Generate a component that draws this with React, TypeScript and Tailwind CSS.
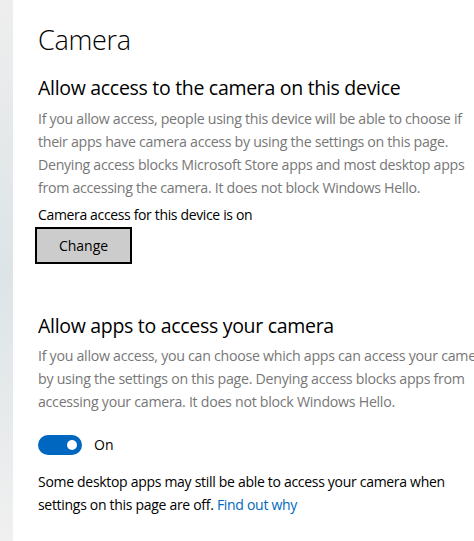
export default function App() {
  return (
    <div
      className="flex h-[541px] w-[474px] overflow-hidden bg-white text-black"
      style={{ fontFamily: '"Open Sans", "Noto Sans", sans-serif' }}
    >
      {/* left nav edge */}
      <div className="w-[13px] shrink-0 bg-gradient-to-b from-[#eeeeee] via-[#dde4e7] to-[#f0f0f0]" />

      <div className="min-w-0 flex-1 overflow-hidden pl-[25px] pt-[22px]">
        <h1 className="text-[27px] leading-[36px] font-light tracking-[-0.3px]">Camera</h1>

        <h2 className="mt-[16px] text-[19.5px] leading-[28px] tracking-[-0.3px]">Allow access to the camera on this device</h2>
        <p className="mt-[5px] w-[436px] text-[14.2px] leading-[23px] text-[#777777] tracking-[-0.3px]">
          If you allow access, people using this device will be able to choose if their apps have camera
          access by using the settings on this page. Denying access blocks Microsoft Store apps and most
          desktop apps from accessing the camera. It does not block Windows Hello.
        </p>

        <p className="mt-[4px] text-[14px] leading-[23px] tracking-[-0.35px]">Camera access for this device is on</p>
        <button className="mt-[1px] -ml-[3px] h-[37px] w-[97px] border-2 border-black bg-[#cccccc] text-[14px] text-black">
          Change
        </button>

        <h2 className="mt-[48px] text-[19.5px] leading-[28px] tracking-[-0.3px]">Allow apps to access your camera</h2>
        <p className="mt-[4px] whitespace-nowrap text-[14.2px] leading-[23px] text-[#777777] tracking-[-0.28px]">
          If you allow access, you can choose which apps can access your camera
          <br />
          by using the settings on this page. Denying access blocks apps from
          <br />
          accessing your camera. It does not block Windows Hello.
        </p>

        <div className="mt-[20px] flex items-center gap-[12px]">
          <div className="flex h-[20px] w-[44px] items-center justify-end rounded-full bg-[#0067c0] pr-[5px]">
            <div className="h-[10px] w-[10px] rounded-full bg-white" />
          </div>
          <span className="text-[14px] leading-[23px]">On</span>
        </div>

        <p className="mt-[14px] whitespace-nowrap text-[14px] leading-[23px] tracking-[-0.3px]">
          Some desktop apps may still be able to access your camera when
          <br />
          settings on this page are off. <a className="text-[#0067c0]">Find out why</a>
        </p>
      </div>
    </div>
  );
}
